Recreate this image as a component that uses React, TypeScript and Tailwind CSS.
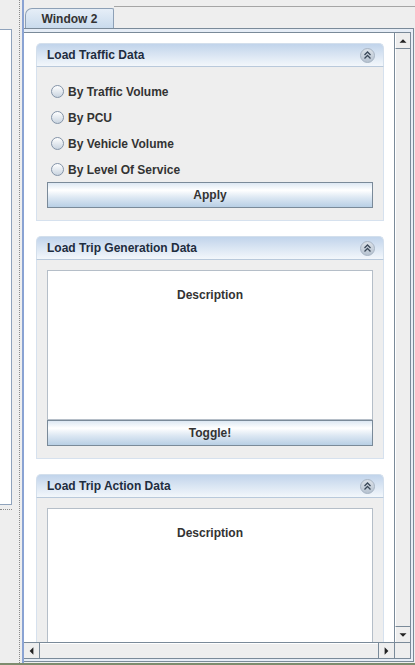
import React from "react";

const BTN_BG =
  "bg-[linear-gradient(to_bottom,#DDE8F3_0%,#FFFFFF_30%,#DDE8F3_60%,#B8CFE5_100%)]";

function Collapse() {
  return (
    <svg width="15" height="15" viewBox="0 0 15 15">
      <defs>
        <linearGradient id="cg" x1="0" y1="0" x2="0" y2="1">
          <stop offset="0" stopColor="#DDE3EA" />
          <stop offset="1" stopColor="#B5C1CF" />
        </linearGradient>
      </defs>
      <circle cx="7.5" cy="7.5" r="7" fill="url(#cg)" stroke="#A7B4C3" />
      <path
        d="M4.5 7 L7.5 4 L10.5 7 M4.5 10.5 L7.5 7.5 L10.5 10.5"
        fill="none"
        stroke="#3A4858"
        strokeWidth="1.3"
      />
    </svg>
  );
}

function Radio({ label }: { label: string }) {
  return (
    <div className="h-[26px] flex items-center pl-[4px] gap-[4px]">
      <span className="w-[13px] h-[13px] rounded-full border border-[#8494A8] bg-[linear-gradient(to_bottom,#FFFFFF,#C9D4E0)]" />
      <span className="text-[12px] font-bold text-[#333333] leading-none pt-[1px]">{label}</span>
    </div>
  );
}

function Button({ label }: { label: string }) {
  return (
    <div
      className={`h-[26px] border border-[#7A8A99] ${BTN_BG} flex items-center justify-center text-[12px] font-bold text-[#333333]`}
    >
      {label}
    </div>
  );
}

function Pane({ title, children }: { title: string; children: React.ReactNode }) {
  return (
    <div className="w-[348px] flex flex-col">
      <div className="h-[24px] flex items-center justify-between rounded-t-[5px] border border-[#D3DFEC] border-b-[#B9C9DB] bg-[linear-gradient(to_bottom,#C1D4EB,#F3F7FB)] pl-[10px] pr-[8px]">
        <span className="text-[12px] font-bold text-[#1E2D3F] leading-none">{title}</span>
        <Collapse />
      </div>
      <div className="border-x border-b border-[#D6E1EE] bg-[#EEEEEE] px-[10px] pt-[10px] pb-[12px]">
        {children}
      </div>
    </div>
  );
}

function DescBox({ tall }: { tall?: boolean }) {
  return (
    <div
      className={`${tall ? "h-[200px]" : "h-[150px]"} bg-white border border-[#B5BEC8] flex justify-center pt-[17px] text-[12px] font-bold text-[#333333] leading-[14px]`}
    >
      Description
    </div>
  );
}

function Tri({ dir }: { dir: "up" | "down" | "left" | "right" }) {
  const pts = {
    up: "4,10 8,6 12,10",
    down: "4,6 8,10 12,6",
    left: "10,4 6,8 10,12",
    right: "6,4 10,8 6,12",
  }[dir];
  return (
    <svg width="16" height="16" viewBox="0 0 16 16">
      <polygon points={pts} fill="#222222" />
    </svg>
  );
}

export default function App() {
  return (
    <div className="w-[415px] h-[665px] bg-[#EEEEEE] flex flex-col overflow-hidden font-['Liberation_Sans',Arial,sans-serif]">
      <div className="h-[663px] flex">
        {/* left panel */}
        <div className="w-[12px] flex flex-col">
          <div className="h-[29px]" />
          <div className="h-[476px] bg-white border-t border-r border-b border-[#8FA3BC]" />
          <div className="mt-[4px] border-t border-dotted border-[#8A8A8A]" />
        </div>
        {/* divider */}
        <div className="w-[7px]" />
        <div className="w-0 border-l border-dotted border-[#8A8A8A]" />
        <div className="w-[2px]" />
        <div className="w-[2px] bg-[#8AA3D3]" />
        {/* right panel */}
        <div className="w-[391px] flex flex-col">
          <div className="h-[28px] flex items-end">
            <div className="ml-[1px] w-[89px] h-[20px] border border-b-0 border-[#8DA0B6] rounded-tl-[7px] rounded-tr-[2px] bg-[linear-gradient(to_bottom,#E6EEF7,#C9DBED)] flex items-center justify-center text-[12px] font-bold text-[#333333]">
              Window 2
            </div>
            <div className="flex-1 self-start mt-[6px] border-t border-[#A5A5A5]" />
          </div>
          <div className="h-[634px] mr-[1px] border-t border-r border-b border-[#7A8A99] bg-[#E6EDF6] pt-[3px] pr-[2px] pb-[2px] flex flex-col">
            <div className="flex-1 border-t border-r border-b border-[#7A8A99] grid grid-cols-[370px_16px] grid-rows-[609px_16px] overflow-hidden">
              {/* viewport */}
              <div className="bg-white overflow-hidden pl-[12px] pt-[10px] flex flex-col gap-[15px]">
                <Pane title="Load Traffic Data">
                  <div className="pt-[1px]">
                    <Radio label="By Traffic Volume" />
                    <Radio label="By PCU" />
                    <Radio label="By Vehicle Volume" />
                    <Radio label="By Level Of Service" />
                    <Button label="Apply" />
                  </div>
                </Pane>
                <Pane title="Load Trip Generation Data">
                  <DescBox />
                  <Button label="Toggle!" />
                </Pane>
                <Pane title="Load Trip Action Data">
                  <DescBox tall />
                </Pane>
              </div>
              {/* vertical scrollbar */}
              <div className="border-l border-[#7A8A99] bg-[#EEEEEE] flex flex-col">
                <div className="h-[16px] border-b border-[#7A8A99] border-l border-l-white flex items-center justify-center">
                  <Tri dir="up" />
                </div>
                <div className="flex-1 border-l border-white" />
                <div className="h-[16px] border-t border-[#7A8A99] border-l border-l-white flex items-center justify-center">
                  <Tri dir="down" />
                </div>
              </div>
              {/* horizontal scrollbar */}
              <div className="border-t border-[#7A8A99] bg-[#EEEEEE] flex">
                <div className="w-[16px] border-r border-[#7A8A99] flex items-center justify-center">
                  <Tri dir="left" />
                </div>
                <div className="flex-1 border-t border-white" />
                <div className="w-[16px] border-l border-[#7A8A99] flex items-center justify-center">
                  <Tri dir="right" />
                </div>
              </div>
              {/* corner */}
              <div className="border-t border-l border-[#7A8A99] bg-[#EEEEEE]" />
            </div>
          </div>
        </div>
      </div>
      <div className="h-[2px] bg-[#7D8C6E]" />
    </div>
  );
}
